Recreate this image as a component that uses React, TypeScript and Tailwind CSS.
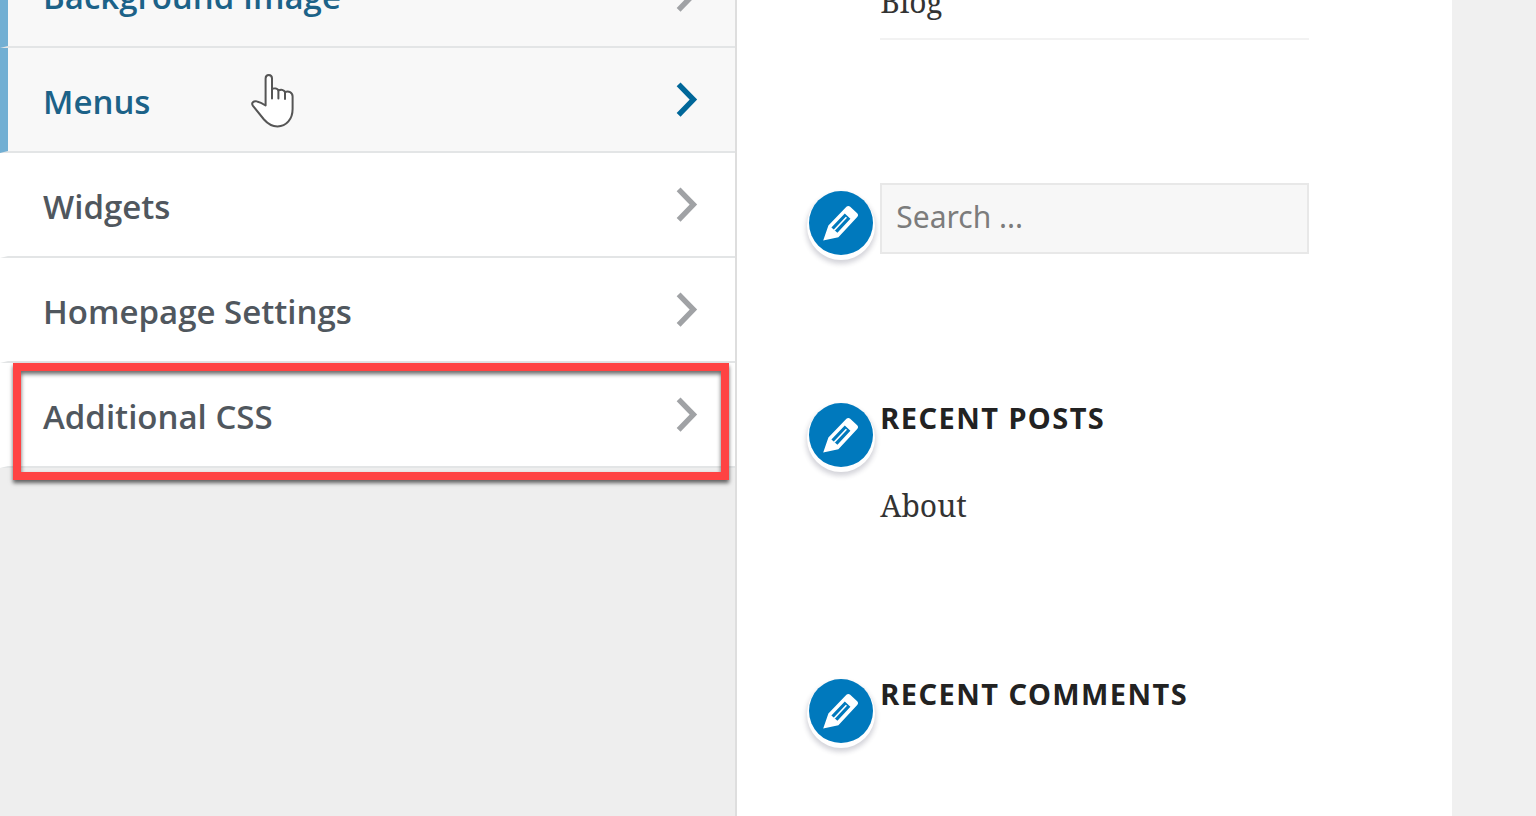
import clsx from 'clsx';

const menuItems = [
  { label: 'Background Image', hovered: true, active: false },
  { label: 'Menus', hovered: true, active: true },
  { label: 'Widgets', hovered: false, active: false },
  { label: 'Homepage Settings', hovered: false, active: false },
  { label: 'Additional CSS', hovered: false, active: false, highlighted: true },
];

function ChevronIcon({ className }: { className?: string }) {
  return (
    <svg
      viewBox="0 0 48 48"
      className={clsx('size-12 shrink-0', className)}
      fill="none"
      stroke="currentColor"
      strokeWidth="5.4"
      aria-hidden="true"
    >
      <path d="M15.6 8.4L30.4 23.6L15.6 38.8" />
    </svg>
  );
}

function HandCursor() {
  return (
    <svg
      viewBox="0 0 43 54"
      className="pointer-events-none absolute top-[26px] left-[251px] h-[54px] w-[43px]"
      fill="#ffffff"
      stroke="#555555"
      strokeWidth="2"
      strokeLinejoin="round"
      strokeLinecap="round"
      aria-hidden="true"
    >
      <path d="M14.6 31.5V4.6C14.6 2.4 16 1 17.8 1S21 2.4 21 4.6V14.8C23.5 14 26.6 14.3 27.4 16.4C30 15.4 33 15.8 34 18C37.5 16.6 41.6 18.2 41.6 22.6V35C41.6 45 35.5 52.4 26.5 52.4C20 52.4 16.5 49.5 13 45.5L2 31.8C-0.2 28.8 2.6 26.6 6 27.4C9 28 12.4 30 14.6 31.5Z" />
      <path d="M21 14.8V24.4M27.4 16.4V24.6M34 18V25" fill="none" />
    </svg>
  );
}

function EditButton({ label }: { label: string }) {
  return (
    <button
      type="button"
      aria-label={label}
      className="mt-2 flex size-16 shrink-0 items-center justify-center rounded-full bg-[#0079bd] text-white shadow-[0_3px_0_2px_#ffffff,0_6px_5px_3px_rgba(40,40,70,0.2)]"
    >
      <svg viewBox="0 0 50 50" className="size-[50px]" aria-hidden="true">
        <path
          fill="currentColor"
          fillRule="evenodd"
          d="M7.2 42.4L12.4 27.6L30.4 8.8C31.6 7.6 33 7.6 34.2 8.8L41.2 15.2C42.4 16.4 42.3 17.8 41.2 19L22.4 39.2ZM28.8 15.6L15.4 29.6L21.4 34.8L34.4 20.8Z"
        />
        <path d="M30.4 19.2L18.2 32.2" fill="none" stroke="currentColor" strokeWidth="1.6" />
      </svg>
    </button>
  );
}

function Sidebar() {
  return (
    <aside className="w-[48%] shrink-0 border-r-2 border-[#dedede] bg-[#eeeeee]">
      {/* The list is scrolled, so the first row is partly out of view */}
      <ul className="-mt-[57px]">
        {menuItems.map((item) => (
          <li key={item.label} className="relative">
            <button
              type="button"
              className={clsx(
                'flex h-[105px] w-full items-center justify-between border-b-2 border-l-8 border-b-[#e3e5e6] pr-6 pl-[35px] text-left',
                "font-['Open_Sans',sans-serif] text-[33px] leading-10 font-semibold",
                item.hovered ? 'border-l-[#72afd3] bg-[#f8f8f8] text-[#1c6288]' : 'border-l-white bg-white text-[#50575e]'
              )}
            >
              <span className="pt-1">{item.label}</span>
              <ChevronIcon className={item.active ? 'text-[#006799]' : 'text-[#a0a2a5]'} />
            </button>
            {item.active && <HandCursor />}
            {item.highlighted && (
              <div className="pointer-events-none absolute top-0 right-[6px] -bottom-3 left-[13px] border-8 border-[#ff4343] shadow-[0_3px_4px_rgba(0,0,0,0.6),inset_0_3px_4px_rgba(0,0,0,0.6)]" />
            )}
          </li>
        ))}
      </ul>
    </aside>
  );
}

function Preview() {
  return (
    <main className="mr-[84px] min-w-0 flex-1 bg-white pr-[143px] pl-[72px] font-['Noto_Serif','DejaVu_Serif',serif] text-[#333333]">
      <div className="-mt-[22px] ml-[71px] border-b-2 border-[#f2f2f2] pb-3">
        <a href="#blog" className="block text-[30px] leading-12">Blog</a>
      </div>

      <section className="mt-[143px] flex gap-[7px]">
        <EditButton label="Edit search widget" />
        <input
          type="search"
          aria-label="Search"
          placeholder="Search ..."
          className="h-[71px] min-w-0 flex-1 border-2 border-[#e8e8e8] bg-[#f7f7f7] px-[14px] pb-1 font-['Noto_Sans',sans-serif] text-[30px] placeholder:text-[#7c7c7c]"
        />
      </section>

      <section className="mt-[140px] flex gap-[7px]">
        <EditButton label="Edit recent posts widget" />
        <div>
          <h2 className="mt-[3px] font-['Noto_Sans',sans-serif] text-[29px] leading-10 font-bold tracking-wider text-[#222222] uppercase">
            Recent Posts
          </h2>
          <a href="#about" className="mt-12 block text-[30px] leading-10">About</a>
        </div>
      </section>

      <section className="mt-[145px] flex gap-[7px]">
        <EditButton label="Edit recent comments widget" />
        <h2 className="mt-[3px] font-['Noto_Sans',sans-serif] text-[29px] leading-10 font-bold tracking-wider text-[#222222] uppercase">
          Recent Comments
        </h2>
      </section>
    </main>
  );
}

export default function App() {
  return (
    <div className="flex h-screen overflow-hidden bg-[#f0f0f0]">
      <Sidebar />
      <Preview />
    </div>
  );
}
